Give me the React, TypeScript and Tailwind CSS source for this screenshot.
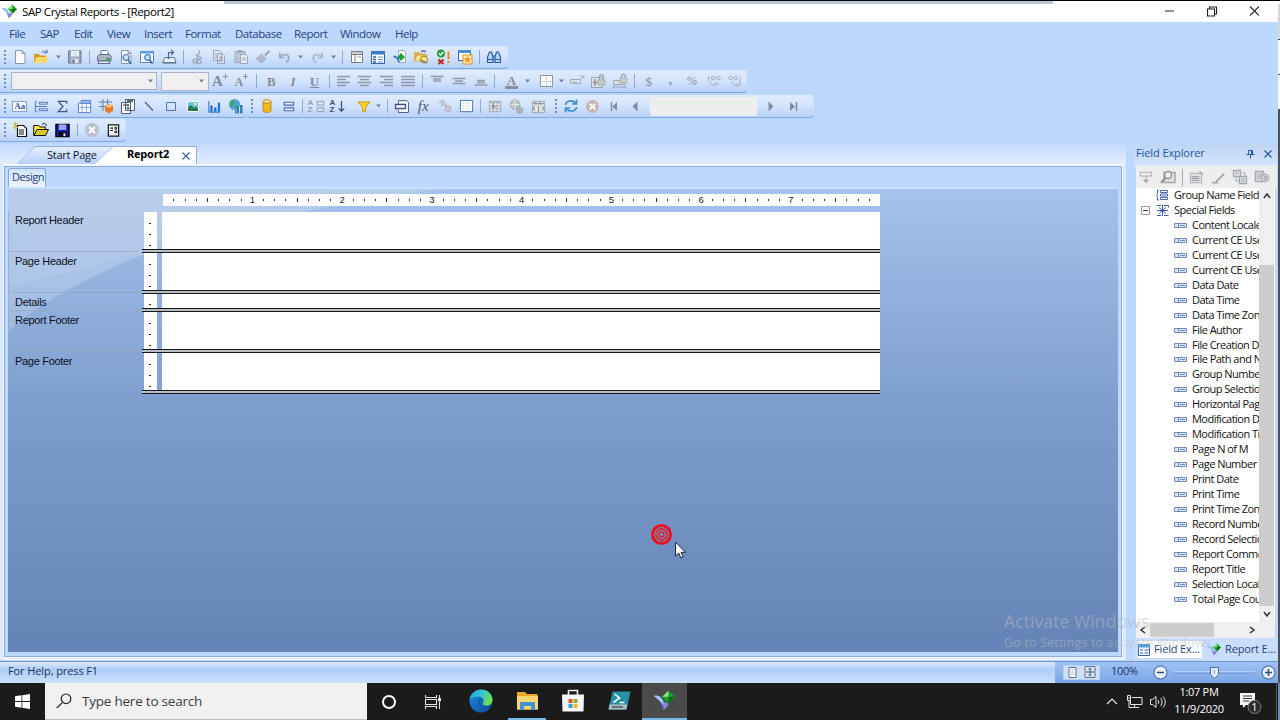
import type { ReactNode } from 'react';
import clsx from 'clsx';

type IconProps = { children: ReactNode; size?: number; dim?: boolean; vb?: string };

function Icon({ children, size = 16, dim, vb = '0 0 16 16' }: IconProps) {
  return (
    <svg width={size} height={size} viewBox={vb} fill="none" className={clsx('shrink-0', dim && 'opacity-75')}>
      {children}
    </svg>
  );
}

// one 21.6px button slot of a toolbar
function Tool({ children }: { children: ReactNode }) {
  return <div className="flex h-full w-[21.6px] shrink-0 items-center justify-center">{children}</div>;
}

function Sep() {
  return (
    <div className="flex w-[7.4px] shrink-0 justify-center">
      <span className="h-[14px] w-px bg-[#8ba9d6]" />
    </div>
  );
}

function Caret({ className = 'w-[11px]' }: { className?: string }) {
  return (
    <div className={clsx('flex shrink-0 items-center justify-center', className)}>
      <svg width="5" height="4" viewBox="0 0 5 4"><path d="M0 .5h5L2.500 3.500z" fill="#6f7f9c" /></svg>
    </div>
  );
}

function Grip() {
  return (
    <div className="flex w-[9px] shrink-0 flex-col items-center gap-[2px]">
      {[0, 1, 2, 3].map((i) => <span key={i} className="h-[2px] w-[2px] bg-[#6d8fc9]" />)}
    </div>
  );
}

function Bar({ children, className }: { children: ReactNode; className?: string }) {
  return (
    <div className={clsx('flex h-[23px] shrink-0 items-center rounded-r-[4px] border-b border-[#7ea6e0] bg-linear-to-b from-[#dfebff] via-[#d3e3fc] to-[#b7d2fa]', className)}>
      {children}
    </div>
  );
}

function CrystalLogo({ size = 16 }: { size?: number }) {
  return (
    <Icon size={size}>
      <path d="M0 4.500C4.500 4 7 6.500 7.400 10L7 15.500C6 10 4 7 0 4.500z" fill="#4a7fd0" />
      <path d="M0 4.500c3-.8 6 .6 7.200 4.500L8 12z" fill="#9fc4f4" />
      <path d="M7 15.500c1.800-1 3.600-3 4-5L7.500 9z" fill="#8f83dd" />
      <path d="M11 .5l4.900 4.700L11 10.500 6.300 5.200z" fill="#18a321" />
      <path d="M11 .5v4.700H6.300z" fill="#8ae886" />
      <path d="M11 10.500V5.200h4.900z" fill="#0b6b1b" />
    </Icon>
  );
}

const gray = '#8b929e';
const navy = '#3a5791';

const Page = ({ stroke = '#8395ba' }: { stroke?: string }) => (
  <path d="M3.500 1.500h6.500l3 3v10h-9.500zM10 1.500v3h3" fill="#fff" stroke={stroke} />
);

function StandardBar() {
  return (
    <Bar className="w-[508px]">
      <Grip />
      <Tool><Icon><Page /></Icon></Tool>
      <Tool>
        <Icon>
          <path d="M1 5h5l1 1.500h6V14H1z" fill="#d99b28" />
          <path d="M3.500 8H16l-3 6H1z" fill="#fbd769" />
          <path d="M8.500 4c1-2.500 4-2.500 5.500-.5M14 .8v3h-3" stroke="#4d6ea8" />
        </Icon>
      </Tool>
      <Caret className="w-[12px]" />
      <Tool>
        <Icon>
          <path d="M1.500 2h12.500v12H1.500z" fill="#9aa5b9" stroke="#6c7890" />
          <path d="M4 2h8v5.500H4z" fill="#f4f7fc" /><path d="M5.500 4h5M5.500 6h5" stroke="#c0cadb" />
          <path d="M4.500 9.500h7V14h-7z" fill="#dbe3ef" /><path d="M5.500 10.500h2V14h-2z" fill="#5c6880" />
        </Icon>
      </Tool>
      <Sep />
      <Tool>
        <Icon>
          <path d="M5 6V1.500h6l1 1V6" fill="#fff" stroke="#6880a9" />
          <path d="M1.500 7.500l2-2h10l1.500 2V12H1.500z" fill="#a9b5c9" stroke="#5b6d8c" />
          <path d="M3 12h10l1 2.500H2z" fill="#e9eef6" stroke="#5b6d8c" /><path d="M10 9h4v2h-4z" fill="#3aa04a" />
        </Icon>
      </Tool>
      <Tool>
        <Icon><Page /><circle cx="8" cy="8.500" r="3" fill="#c9e5fb" stroke="#3d77b8" strokeWidth="1.200" /><path d="M10 11l3 3.500" stroke="#2c5c97" strokeWidth="1.500" /></Icon>
      </Tool>
      <Tool>
        <Icon>
          <path d="M1.500 2.500h13v11h-13z" fill="#fff" stroke="#5a87c4" /><path d="M1 2h14v2.500H1z" fill="#5e9be3" />
          <circle cx="8.500" cy="8.500" r="2.800" fill="#c9e5fb" stroke="#3d77b8" strokeWidth="1.200" /><path d="M10.500 11l3 3.500" stroke="#2c5c97" strokeWidth="1.500" />
        </Icon>
      </Tool>
      <Tool>
        <Icon>
          <path d="M4 8.500h9.500l1.500 5H1.500z" fill="#e6edf7" stroke="#657796" /><path d="M2 14h13" stroke="#657796" strokeWidth="1.300" />
          <path d="M7.500 10V3.500h4M10 1l2.500 2.500L10 6" stroke="#4b658f" strokeWidth="1.200" />
        </Icon>
      </Tool>
      <Sep />
      <Tool><Icon dim><path d="M10 1L7 9.500M5.500 5.500l7 4M12 9l-6 1" stroke={gray} strokeWidth="1.200" /><circle cx="5" cy="12" r="1.900" stroke={gray} strokeWidth="1.300" /><circle cx="9" cy="12.800" r="1.900" stroke={gray} strokeWidth="1.300" /></Icon></Tool>
      <Tool><Icon dim><path d="M2.500 1.500h6l2 2v8h-8zM6.500 4.500h5l2 2v8h-7z" fill="#e3e7ee" stroke={gray} /><path d="M8 8h4M8 10h4M8 12h4M4 5h2M4 7h2M4 9h2" stroke={gray} /></Icon></Tool>
      <Tool><Icon dim><path d="M2 2.500h10v11H2z" fill="#b9bdc6" stroke={gray} /><path d="M5 1h4v3H5z" fill={gray} /><path d="M7.500 5.500h5l2 2v7h-7z" fill="#f3f4f7" stroke={gray} /><path d="M9 9h4M9 11h4" stroke={gray} /></Icon></Tool>
      <Tool><Icon dim><path d="M14.500 2L10 6.500" stroke={gray} strokeWidth="2.200" /><path d="M6.500 5L11 9.500 7 14c-2-.5-4.500-2.500-5.500-4.500z" fill="#a9adb7" stroke={gray} strokeWidth=".6" /></Icon></Tool>
      <Tool><Icon size={15} dim><path d="M3 3v5h5M3.500 7.500C6 3.500 13 4 12.500 9c-.2 2-1.500 3.500-3 4" stroke="#8694b0" strokeWidth="1.800" /></Icon></Tool>
      <Caret className="w-[12px]" />
      <Tool><Icon size={15} dim><path d="M13 3v5H8M12.500 7.500C10 3.500 3 4 3.500 9c.2 2 1.500 3.500 3 4" stroke="#a0abc0" strokeWidth="1.800" /></Icon></Tool>
      <Caret className="w-[10px]" />
      <Sep />
      <Tool><Icon><path d="M2.500 2.500h11v11h-11zM3 5.500h10M6 6v7" fill="#fff" stroke="#7a7d84" /><path d="M3 3h10v2H3z" fill="#c9ccd3" /><path d="M8 8h4" stroke="#999" /></Icon></Tool>
      <Tool><Icon><path d="M1.500 2.500h13v12h-13z" fill="#fff" stroke="#2f62ad" /><path d="M1 2h14v3.500H1z" fill="#3f79c9" /><path d="M3 8h3M3 10.500h3M3 13h3" stroke="#2f62ad" strokeWidth="1.400" /><path d="M8 8h5M8 10.500h5M8 13h5" stroke="#6c96d2" strokeWidth="1.200" /></Icon></Tool>
      <Tool><Icon><path d="M6.500 1.500h5l2 2v10h-7z" fill="#fff" stroke="#96a5c2" /><path d="M9 4l4 4-4 4-3.500-4z" fill="#23a52c" /><path d="M1.500 7.500c3 0 5 2 5.500 6" stroke="#3c78cb" strokeWidth="2" /></Icon></Tool>
      <Tool><Icon><path d="M1 3h5l1 1.500h5V11H1z" fill="#dfb04c" /><path d="M4 6h10l-3 6H1z" fill="#fde58f" stroke="#a8892e" strokeWidth=".6" /><circle cx="11" cy="10.500" r="3.500" fill="#ffe278" stroke="#a47c22" /><path d="M8 3c2-2 4-1 5 0M8 11l6 3" stroke="#63738f" strokeWidth="1.200" /></Icon></Tool>
      <Tool><Icon><circle cx="6" cy="4.500" r="4" fill="#2d9b3b" /><path d="M4 4.500L5.500 6 8.500 3" stroke="#fff" strokeWidth="1.300" /><path d="M3.500 10.500l5 4.500M8.500 10.500l-5 4.500" stroke="#c22b1c" strokeWidth="2.200" /><path d="M12.500 2.500h2v7.500h-2zM12.500 12h2v2h-2z" fill="#e98a10" /></Icon></Tool>
      <Tool><Icon><path d="M1.500 1.500h12v10h-12z" fill="#fff" stroke="#2f69b3" /><path d="M1 1h13v3H1z" fill="#4c8ddc" /><path d="M6 6h9v9H6z" fill="#fff1bf" stroke="#d79422" /><path d="M10.500 6.500l1.100 2.700 2.900.2-2.200 1.900.7 2.800-2.500-1.500L8 14.100l.7-2.800-2.200-1.900 2.900-.2z" fill="#f09a12" /></Icon></Tool>
      <Sep />
      <Tool><Icon><path d="M3.500 3h2l1.500 5v5.500H1.500V8zM10.500 3h2l2 5v5.500H9V8z" fill="#b9d5f6" stroke="#2d5aa0" strokeWidth="1.200" /><path d="M7 7h2M7 9h2M1.500 10.500H7M9 10.500h5.500" stroke="#2d5aa0" strokeWidth="1.200" /></Icon></Tool>
    </Bar>
  );
}

function Letter({ children, className }: { children: ReactNode; className?: string }) {
  return <span className={clsx("font-['Liberation_Serif',serif] leading-none text-[#858d9a]", className)}>{children}</span>;
}

const Plus = () => <Icon size={5} vb="0 0 5 5"><path d="M0 2.500h5M2.500 0v5" stroke={gray} /></Icon>;

// alignment buttons are stacks of short rules
function Lines({ d }: { d: string }) {
  return <Icon><path d={d} stroke="#9199a8" strokeWidth={1.600} /></Icon>;
}

function FormatBar() {
  return (
    <Bar className="w-[747px]">
      <Grip />
      <div className="ml-[2px] flex h-[18px] w-[146px] shrink-0 items-center justify-end border border-[#a5b4ca] bg-[#efefef] pr-px"><Caret className="w-[9px]" /></div>
      <div className="ml-[4px] flex h-[19px] w-[48px] shrink-0 items-center justify-end border border-[#a5b4ca] bg-[#efefef] pr-px"><Caret className="w-[11px]" /></div>
      <Tool><div className="flex items-start"><Letter className="text-[15px] font-bold">A</Letter><Plus /></div></Tool>
      <Tool><div className="flex items-start"><Letter className="pt-[2px] text-[12px] font-bold">A</Letter><Plus /></div></Tool>
      <div className="w-px shrink-0" />
      <Sep />
      <Tool><Letter className="text-[13px] font-bold">B</Letter></Tool>
      <Tool><Letter className="text-[13px] font-bold italic">I</Letter></Tool>
      <Tool><Letter className="text-[13px] font-bold underline">U</Letter></Tool>
      <Sep />
      <Tool><Lines d="M1 3.500h13M1 6.500h9M1 9.500h13M1 12.500h9" /></Tool>
      <Tool><Lines d="M1 3.500h13M3 6.500h9M1 9.500h13M3 12.500h9" /></Tool>
      <Tool><Lines d="M1 3.500h13M5 6.500h9M1 9.500h13M5 12.500h9" /></Tool>
      <Tool><Lines d="M1 3.500h14M1 6.500h14M1 9.500h14M1 12.500h14" /></Tool>
      <Sep />
      <Tool><Lines d="M1.500 3.500h13M4 6h8M4 8h8" /></Tool>
      <Tool><Lines d="M1.500 5.500h13M4 8h8M1.500 10.500h13" /></Tool>
      <Tool><Lines d="M4 7.500h8M4 9.500h8M1.500 12h13" /></Tool>
      <Sep />
      <div className="w-[2px] shrink-0" />
      <Tool>
        <div className="flex flex-col items-center"><Letter className="h-[12px] text-[13px] font-bold">A</Letter><span className="h-[3px] w-[13px] bg-[#858d9a]" /></div>
      </Tool>
      <Caret className="w-[10px]" />
      <Tool><div className="ml-[7px] h-[12px] w-[13px] border border-[#8b95a4] bg-white"><Icon size={11} vb="0 0 11 11"><path d="M5.500 1v9M1 5.500h9" stroke="#aaa" strokeDasharray="1 1" /></Icon></div></Tool>
      <Caret className="ml-[3px] w-[9px]" />
      <Tool><Icon dim><path d="M1.500 6.500h10v4h-10zM4 9h4" stroke={gray} fill="#e1e5ec" /><path d="M11.500 2l4 4M15.500 2l-4 4" stroke={gray} /></Icon></Tool>
      <Tool><Icon dim><path d="M1.500 4.500h11v10h-11z" fill="#e3dfd6" stroke={gray} /><path d="M5 6v7M3 9.500h5" stroke="#777" strokeWidth="1.300" /><path d="M8 7h7v5H8z" fill="#cbc5b6" stroke={gray} strokeWidth=".7" /><path d="M9.500 7V4c0-3 4-3 4 0v3" stroke={gray} strokeWidth="1.400" /></Icon></Tool>
      <Tool><Icon dim><path d="M1.500 7.500h11v4h-11z" fill="#e3dfd6" stroke={gray} /><path d="M1 14h13M2.500 12.500L1 14l1.500 1.500M12.500 12.500L14 14l-1.500 1.500" stroke={gray} /><path d="M8 5h7v5H8z" fill="#cbc5b6" stroke={gray} strokeWidth=".7" /><path d="M9.500 5V3.500c0-3 4-3 4 0V5" stroke={gray} strokeWidth="1.400" /></Icon></Tool>
      <Sep />
      <Tool><Letter className="text-[13px]">$</Letter></Tool>
      <Tool><Letter className="pb-[4px] text-[13px] font-bold">,</Letter></Tool>
      <Tool><Letter className="font-['Liberation_Sans',sans-serif] text-[12px]">%</Letter></Tool>
      <Tool><Icon size={14} dim><path d="M2 3v5M1 5h2" stroke={gray} /><circle cx="7" cy="4.500" r="2" stroke={gray} /><circle cx="13" cy="4.500" r="2" stroke={gray} /><path d="M4 9c0 5 7 5 7 1M8.500 12L11 9.500 13.500 12" stroke={gray} /></Icon></Tool>
      <Tool><Icon size={14} dim><circle cx="3" cy="4.500" r="2" stroke={gray} /><circle cx="9" cy="4.500" r="2" stroke={gray} /><path d="M14 3v10M5 9c0 5 6 4 7 4M10 9.500L12.500 12 10 14.500" stroke={gray} /></Icon></Tool>
    </Bar>
  );
}

function InsertBars() {
  return (
    <div className="mt-px flex">
      <Bar className="w-[247px]">
        <Grip />
        <Tool><div className="flex h-[11px] w-[15px] items-center justify-center border border-[#89a3d0] bg-[#f4f8ff] font-['Liberation_Serif',serif] text-[9px] leading-none font-bold text-[#47639d]">Aa</div></Tool>
        <Tool><Icon size={15}><path d="M3 2.500H1.500v11H3M5.500 3.500h9v2h-9zM1 8h13M5.500 10.500h9v2h-9z" stroke="#5676b2" /></Icon></Tool>
        <Tool><Icon size={15}><path d="M12.500 5V2.500H3.500L8.500 8l-5 5.500h9V11" stroke={navy} strokeWidth="1.300" /></Icon></Tool>
        <Tool><Icon size={15}><path d="M1.500 4.500h13v10h-13z" fill="#fff" stroke="#4f7cc5" /><path d="M4.500 1.500h10v3h-10z" fill="#9ec2f3" stroke="#4f7cc5" /><path d="M5.500 4v10M10 4v10M1 9h13" stroke="#7aa3df" /></Icon></Tool>
        <Tool><Icon><path d="M5 1v12M9.500 1v7M1 4h13M1 8.500h8" stroke="#6080bb" /><path d="M11 6l4 2v5l-4 2.500L7 13V8z" fill="#e57a22" /><path d="M11 6l4 2-4 2-4-2z" fill="#ffc170" /></Icon></Tool>
        <Tool><Icon><path d="M5.500 1.500h9v11h-9zM1.500 4.500h9v11h-9z" fill="#fff" stroke="#4f5c78" /><path d="M7 2h6v2H7z" fill="#59647c" /><path d="M3 7h6M8 6v5M6 9.500l2 2 2-2" stroke="#33415f" /></Icon></Tool>
        <Tool><Icon><path d="M4 4l8 8.500" stroke={navy} strokeWidth="1.100" /></Icon></Tool>
        <Tool><Icon><path d="M3.500 4.500h9v8h-9z" stroke="#5474af" /></Icon></Tool>
        <Tool><Icon><path d="M2.500 3.500h11v10h-11z" fill="#6cc4ed" stroke="#fff" /><path d="M3 13V9l3-2 3 3 2-1.500 2 2V13z" fill="#247b4c" /><circle cx="10" cy="6" r="1.300" fill="#fff17b" /></Icon></Tool>
        <Tool><Icon size={15}><path d="M2 2v12h12" stroke="#2a5fae" /><path d="M3.500 7H6v6.500H3.500zM7.500 9H10v4.500H7.500zM11.500 4H14v9.500h-2.500z" fill="#1f74cf" /></Icon></Tool>
        <Tool><Icon><circle cx="6.500" cy="6.500" r="5.500" fill="#4e9fe0" /><path d="M3 3c3-2 5 0 3 3S3 9 2 7zM8 7c2-1 3 1 2 3s-2 1-3 0z" fill="#3fa955" /><path d="M9 9h2v6.500H9zM12 7h2.500v8.500H12zM7 12h1.500v3.500H7z" fill="#347cb4" /></Icon></Tool>
      </Bar>
      <Bar className="w-[304px]">
        <Grip />
        <Tool><Icon><path d="M4 3.500v9c0 2.500 8 2.500 8 0v-9z" fill="#f3b91b" stroke="#ad7a10" strokeWidth=".8" /><ellipse cx="8" cy="3.500" rx="4" ry="1.800" fill="#ffe793" stroke="#ad7a10" strokeWidth=".8" /></Icon></Tool>
        <Tool><Icon size={15}><path d="M3.500 3.500h10v3h-10zM3.500 9.500h10v3h-10z" fill="#e6f0ff" stroke="#4b6dae" strokeWidth="1.200" /></Icon></Tool>
        <Sep />
        <Tool>
          <div className="flex items-center gap-px opacity-70"><div className="font-['Liberation_Sans',sans-serif] text-[8px] leading-[7px] font-bold text-[#7d8592]">A<br />Z</div><Icon size={13} vb="0 0 8 14"><path d="M.5 1.500h7v4h-7zM.5 8.500h7v4h-7z" stroke={gray} strokeWidth="1.200" /></Icon></div>
        </Tool>
        <Tool>
          <div className="flex items-center"><div className="font-['Liberation_Sans',sans-serif] text-[8px] leading-[7px] font-bold text-[#3e5277]">A<br />Z</div><Icon size={13} vb="0 0 8 14"><path d="M4 1v11M1 9l3 3 3-3" stroke="#3e5277" strokeWidth="1.400" /></Icon></div>
        </Tool>
        <div className="w-[2px] shrink-0" />
        <Tool><Icon><path d="M3 4h12l-4.500 5.500V14l-3-1V9.500z" fill="#ffd321" stroke="#c49716" /></Icon></Tool>
        <Caret className="w-[10px]" />
        <Sep />
        <Tool><Icon><path d="M4.500 6V2.500h8l2 2v10h-10V12" fill="#f5f8fd" stroke="#52658a" /><path d="M1.500 6.500h10v4h-10z" fill="#fff" stroke="#3f547f" strokeWidth="1.300" /></Icon></Tool>
        <Tool><span className="font-['Liberation_Serif',serif] text-[15px] leading-none text-[#46597f] italic">fx</span></Tool>
        <Tool><Icon dim><path d="M6 2l4 8M2 4l5-2M4 8l5-2" stroke={gray} /><circle cx="6" cy="5" r="2.500" fill="#bdbfc8" /><circle cx="11" cy="10.500" r="3" fill="#d7bdbb" stroke={gray} strokeWidth=".7" /></Icon></Tool>
        <Tool><Icon size={15}><path d="M1.500 1.500h13v12h-13z" fill="#fff" stroke="#3b73b8" /><path d="M4 4.500h9M4 7.500h9M4 10.500h9" stroke="#75a4d9" strokeDasharray="1 2" /></Icon></Tool>
        <Sep />
        <Tool><Icon size={15} dim><path d="M1.500 2.500h12v11h-12z" fill="#edeae3" stroke={gray} /><path d="M2 4h11M5.500 3v10M9.500 3v10M2 7.500h11M2 10.500h11" stroke="#999" /><path d="M5.500 4.500v6M4 8h4" stroke="#777" strokeWidth="1.500" /></Icon></Tool>
        <Tool><Icon size={15} dim><circle cx="6.500" cy="6" r="5" fill="#bcb8b0" stroke={gray} /><path d="M2 6h9M6.500 1v10" stroke="#eee" /><path d="M8 9l4-1 3 3-2 4H9z" fill="#aaa59b" stroke={gray} /></Icon></Tool>
        <Tool><Icon size={15} dim><path d="M1.500 2.500h13v12h-13z" fill="#eae6dd" stroke={gray} /><path d="M2 5h12M5 2v4M10 2v4M4 8L2 10l2 2M12 8l2 2-2 2M8 7v7" stroke="#7d7f84" strokeWidth="1.300" /></Icon></Tool>
      </Bar>
      <Bar className="w-[263px]">
        <Grip />
        <Tool><Icon><path d="M2.500 7C3 2.500 9.500 1.500 12.500 5M13.500 1.500V6H9M13.500 9c-.5 4.500-7 5.500-10 2M2.500 14.500V10H7" stroke="#3c8bcb" strokeWidth="1.700" /></Icon></Tool>
        <Tool><Icon size={15} dim><circle cx="8" cy="8" r="6.800" fill="#c5a49b" /><path d="M5 5l6 6M11 5l-6 6" stroke="#fff" strokeWidth="2.200" /></Icon></Tool>
        <Tool><Icon><path d="M5.500 4v9" stroke="#7b8da9" strokeWidth="1.500" /><path d="M6.500 8.500L11 4v9z" fill="#7b8da9" /></Icon></Tool>
        <Tool><Icon><path d="M4.500 8.500L9.500 3.500v10z" fill="#7b8da9" /></Icon></Tool>
        <div className="ml-[4px] h-[19px] w-[107px] shrink-0 rounded-[3px] bg-[#edefee]" />
        <div className="w-[3px] shrink-0" />
        <Tool><Icon><path d="M10.500 8.500L5.500 3.500v10z" fill="#7b8da9" /></Icon></Tool>
        <Tool><Icon><path d="M11.500 4v9" stroke="#7b8da9" strokeWidth="1.500" /><path d="M10 8.500L5 4v9z" fill="#7b8da9" /></Icon></Tool>
      </Bar>
    </div>
  );
}

function FileBar() {
  return (
    <Bar className="w-[126px]">
      <Grip />
      <Tool><Icon><path d="M5.500 3.500h6l3 3v8h-9z" fill="#fff" stroke="#111" strokeWidth="1.200" /><path d="M7 8h5M7 10h5M7 12h5" stroke="#111" /><path d="M1 1l5 5M6 1L1 6M3.500 0v7" stroke="#c8b912" /></Icon></Tool>
      <Tool><Icon><path d="M.7 3.500h5l1 1.500h5.500v8.500H.7z" fill="#fff23a" stroke="#111" /><path d="M4 7.500h11.500l-3 6H1z" fill="#d9c926" stroke="#111" /><path d="M9 2.500c2-2 4-1 4.500 1.500" stroke="#111" /></Icon></Tool>
      <Tool><Icon size={15}><path d="M1 1.500h14v13H1z" fill="#14199e" stroke="#050508" strokeWidth="1.500" /><path d="M4 1.500h8v6H4z" fill="#8fa8ef" /><path d="M4 9.500h8V15H4z" fill="#0b0b10" /><path d="M9 11h2v3H9z" fill="#eee" /></Icon></Tool>
      <Sep />
      <Tool><Icon><circle cx="8" cy="8" r="7" fill="#b9c0cb" /><path d="M5 5l6 6M11 5l-6 6" stroke="#fff" strokeWidth="2" /></Icon></Tool>
      <Tool><Icon size={15}><path d="M2.500 2h11v12h-11z" fill="#fff" stroke="#15171c" strokeWidth="1.300" /><path d="M4.500 5.500h3M4.500 8h3" stroke="#15171c" strokeWidth="1.300" /><path d="M9.500 4.500h2v2h-2zM9.500 8.500h2v2h-2z" stroke="#15171c" /></Icon></Tool>
    </Bar>
  );
}

const menus = [
  { label: 'File', w: 'w-[31px]' },
  { label: 'SAP', w: 'w-[34px]' },
  { label: 'Edit', w: 'w-[33px]' },
  { label: 'View', w: 'w-[37px]' },
  { label: 'Insert', w: 'w-[41px]' },
  { label: 'Format', w: 'w-[50px]' },
  { label: 'Database', w: 'w-[59px]' },
  { label: 'Report', w: 'w-[46px]' },
  { label: 'Window', w: 'w-[55px]' },
  { label: 'Help', w: 'w-[40px]' },
];

const sections = [
  { name: 'Report Header', h: 'h-[41px]', dots: 3 },
  { name: 'Page Header', h: 'h-[41px]', dots: 3 },
  { name: 'Details', h: 'h-[18px]', dots: 1 },
  { name: 'Report Footer', h: 'h-[41px]', dots: 3 },
  { name: 'Page Footer', h: 'h-[41px]', dots: 3 },
];

const specialFields = [
  'Content Locale', 'Current CE User ID', 'Current CE User Name', 'Current CE User Time Zone', 'Data Date', 'Data Time',
  'Data Time Zone', 'File Author', 'File Creation Date', 'File Path and Name', 'Group Number', 'Group Selection Formula',
  'Horizontal Page Number', 'Modification Date', 'Modification Time', 'Page N of M', 'Page Number', 'Print Date',
  'Print Time', 'Print Time Zone', 'Record Number', 'Record Selection Formula', 'Report Comments', 'Report Title',
  'Selection Locale', 'Total Page Count',
];

function Ruler() {
  return (
    <div className="ml-[155px] flex h-[12px] w-[717px] items-center bg-white pl-[5.200px]">
      {Array.from({ length: 63 }, (_, i) => i + 1).map((n) => (
        <div key={n} className="flex w-[11.220px] shrink-0 items-center justify-center">
          {n % 8 === 0 ? (
            <span className="font-['Liberation_Sans',sans-serif] text-[9.500px] leading-none text-[#222]">{n / 8}</span>
          ) : n % 4 === 0 ? (
            <span className="h-[4px] w-px bg-[#333]" />
          ) : (
            <span className="h-[2px] w-px bg-[#333]" />
          )}
        </div>
      ))}
    </div>
  );
}

function DesignSurface() {
  return (
    <div className="relative h-[465px] overflow-hidden border-t-2 border-[#c4e2fb] bg-linear-to-b from-[#a4c2ec] via-[#7d9dce] via-48% to-[#6484b7]">
      <svg className="absolute top-0 left-0" width="500" height="150" viewBox="0 0 500 150">
        <defs>
          <linearGradient id="sheen" x1="0" y1="0" x2="0" y2="1">
            <stop offset="0" stopColor="#bccfea" stopOpacity=".75" />
            <stop offset="1" stopColor="#b4caee" stopOpacity=".45" />
          </linearGradient>
        </defs>
        <path d="M0 0h440C330 10 220 40 135 66 85 84 30 115 0 143z" fill="url(#sheen)" />
        <path d="M0 0h330C250 20 190 42 135 62 90 78 40 90 0 96z" fill="#c3d4ef" fillOpacity=".22" />
      </svg>
      <div className="relative pt-[5px]">
        <Ruler />
        <div className="flex pt-[5px]">
          <div className="w-[134px] shrink-0 pr-[3px] font-['Liberation_Sans',sans-serif] text-[11px] leading-[18px] tracking-[-0.3px]">
            {sections.map((s) => (
              <div key={s.name} className={clsx('border-b border-l border-[#98a6b8]/70 pl-[6px] text-[#0c1220] last:border-b-transparent', s.h)}>{s.name}</div>
            ))}
          </div>
          <div className="mt-px w-[738px] shrink-0">
            {sections.map((s) => (
              <div key={s.name} className={clsx('flex flex-col', s.h)}>
                <div className="ml-[2px] flex flex-1">
                  <div className="flex w-[13px] flex-col items-center justify-end gap-[10.200px] bg-white pr-[2px] pb-[3px]">
                    {Array.from({ length: s.dots }, (_, i) => <span key={i} className="h-px w-[2px] bg-[#222]" />)}
                  </div>
                  <div className="w-[5px]" />
                  <div className="flex-1 bg-white" />
                </div>
                <div className="h-[4px] border-y border-[#15171b] bg-[#b9bcc0]" />
              </div>
            ))}
          </div>
        </div>
      </div>
    </div>
  );
}

function DocumentPane() {
  return (
    <div className="flex w-[1126px] shrink-0 flex-col">
      <div className="flex h-[20px] items-end bg-linear-to-b from-[#c3dbff] to-[#e2edff] pl-[17px]">
        <div className="h-[18px] w-[100px] bg-[#8fb0e0] pt-px [clip-path:polygon(18px_0,100%_0,82px_100%,0_100%)]">
          <div className="h-[17px] bg-linear-to-b from-[#e6f0ff] to-[#b3d0f8] pl-[30px] text-[11px] leading-[15px] tracking-[-0.25px] text-[#141a28] [clip-path:polygon(18px_0,100%_0,82px_100%,0_100%)]">Start Page</div>
        </div>
        <div className="-ml-[22px] h-[18px] w-[102px] bg-[#8fb0e0] pt-px pr-px [clip-path:polygon(18px_0,100%_0,100%_100%,0_100%)]">
          <div className="flex h-[17px] items-center bg-white pb-[2px] pl-[32px] text-[11px] font-bold tracking-[-0.2px] text-black [clip-path:polygon(18px_0,100%_0,100%_100%,0_100%)]">
            Report2
            <svg className="mt-[2px] ml-[13px]" width="8" height="8" viewBox="0 0 8 8"><path d="M.5.500l7 7M7.500.500l-7 7" stroke="#3d5e9e" strokeWidth="1.200" /></svg>
          </div>
        </div>
      </div>
      <div className="flex h-[496px] flex-col border-x-3 border-[#dbe9fd] bg-[#f1f7ff] pt-[2px]">
        <div className="mx-px flex flex-1 flex-col border border-[#8facd9] bg-[#bdd8ff] px-[3px] pb-[4px]">
          <div className="flex h-[20px] items-end">
            <div className="h-[19px] w-[38px] rounded-t-[3px] border border-b-0 border-[#86a7da] bg-linear-to-b from-[#d0e3ff] to-[#eef5ff] pl-[3px] text-[11px] leading-[15px] tracking-[-0.5px] text-[#1e3c77]">Design</div>
          </div>
          <DesignSurface />
        </div>
        <div className="h-[4px] bg-[#e8f1fd]" />
      </div>
    </div>
  );
}

const FieldIcon = () => (
  <svg width="13" height="7" viewBox="0 0 13 7" className="shrink-0"><path d="M.5 1.500h12v4H.5z" fill="#dbe5f8" stroke="#6f88c2" /><path d="M4.500 2v3M6 3.500h5" stroke="#6f88c2" /></svg>
);

function Chevron({ dir }: { dir: 'up' | 'down' | 'left' | 'right' }) {
  const d = { up: 'M1 6l3-4 3 4', down: 'M1 2l3 4 3-4', left: 'M6 1L2 4l4 3', right: 'M2 1l4 3-4 3' }[dir];
  return <svg width="8" height="8" viewBox="0 0 8 8" fill="none"><path d={d} stroke="#333" strokeWidth="1.500" /></svg>;
}

function FieldExplorer() {
  return (
    <div className="ml-[8px] flex w-[143px] shrink-0 flex-col">
      <div className="flex h-[22px] items-center bg-linear-to-b from-[#bdd5f3] to-[#d5e6fd] pb-[3px] pl-[2px] text-[11px] text-[#2456a4]">
        <span className="w-[110px] tracking-[-0.1px]">Field Explorer</span>
        <svg width="9" height="10" viewBox="0 0 9 10" fill="none"><path d="M2.500 1.500h4v4h-4zM5.500 1v5M.5 5.500h8M4.500 6v3.500" stroke="#2456a4" /></svg>
        <svg className="ml-[9px]" width="8" height="8" viewBox="0 0 8 8"><path d="M.5.500l7 7M7.500.500l-7 7" stroke="#2456a4" strokeWidth="1.200" /></svg>
      </div>
      <div className="ml-[2px] flex h-[22px] items-center bg-[#eeeeee]">
        <Tool><Icon size={15} dim><path d="M1.500 2.500h12v4h-12zM7.500 6v4" stroke={gray} /><path d="M4 10h7l-3.500 4z" fill={gray} /></Icon></Tool>
        <Tool><Icon size={16} dim><path d="M4 3.500h11v10H4z" fill="#ddd" stroke={gray} strokeWidth="1.500" /><circle cx="8" cy="6" r="3.500" fill="#eee" stroke="#777" strokeWidth="1.500" /><path d="M5.500 8.500L1 14" stroke="#777" strokeWidth="2" /></Icon></Tool>
        <div className="mx-[3px] h-[17px] w-px bg-[#aaa]" />
        <Tool><Icon size={15} dim><path d="M1.500 3.500h12v10h-12z" fill="#ddd" stroke={gray} /><path d="M3 7h8M3 9h8M3 11h8M11 1l4 4" stroke={gray} strokeWidth="1.300" /></Icon></Tool>
        <Tool><Icon size={15} dim><path d="M14 4L7 11l-2 1.500M1 13.500h7" stroke={gray} strokeWidth="2" /></Icon></Tool>
        <Tool><Icon size={16} dim><path d="M1.500 1.500h7v6h-7zM7.500 7.500h7v7h-7z" fill="#ddd" stroke={gray} strokeWidth="1.300" /><path d="M3 4h4M9 10h4M9 12h4M10 4h3v3M4 9v3h3" stroke={gray} /></Icon></Tool>
        <Tool><Icon size={16} dim><path d="M1.500 2.500h8v10h-8z" fill="#ddd" stroke={gray} strokeWidth="1.500" /><path d="M3 5h5M3 7h5M3 9h5" stroke={gray} /><circle cx="11" cy="9" r="4" fill="#ccc" stroke={gray} /><path d="M10 7l3 2-3 2" stroke="#777" /></Icon></Tool>
      </div>
      <div className="ml-[2px] flex h-[434px] w-[139px] bg-white">
        <div className="w-[123px] shrink-0 overflow-hidden text-[11px] leading-[14.960px] tracking-[-0.52px] whitespace-nowrap text-[#111]">
          <div className="flex h-[14.960px] items-center pl-[20px]">
            <svg width="13" height="12" viewBox="0 0 13 12" fill="none" className="mr-[5px] shrink-0"><path d="M3 1H1.500v3.500L.5 6l1 1.500V11H3M4.500 1.500h7v2h-7zM4.500 5h7v2h-7zM4.500 8.500h7v2h-7z" stroke="#4766ab" /></svg>
            Group Name Fields
          </div>
          <div className="flex h-[14.960px] items-center pl-[5px]">
            <svg width="9" height="9" viewBox="0 0 9 9" fill="none" className="mr-[6px] shrink-0"><path d="M.5.500h8v8h-8z" fill="#fff" stroke="#999" /><path d="M2 4.500h5" stroke="#345" /></svg>
            <svg width="13" height="13" viewBox="0 0 13 13" fill="none" className="mr-[5px] shrink-0"><path d="M1 1.500h4M8 1.500h4.500v2M1 11.500h4M8 11.500h4.500M1 6.500h11M6.500 1v11M3 3.500l7 6M10 3.500l-7 6" stroke="#3c5ca3" /></svg>
            Special Fields
          </div>
          {specialFields.map((f) => (
            <div key={f} className="flex h-[14.960px] items-center gap-[5px] pl-[38px]"><FieldIcon />{f}</div>
          ))}
        </div>
        <div className="flex w-[15px] flex-col items-center bg-[#efefef]">
          <div className="flex h-[16px] items-center"><Chevron dir="up" /></div>
          <div className="mt-[61px] h-[341px] w-full bg-[#cdcdcd]" />
          <div className="flex h-[16px] items-center"><Chevron dir="down" /></div>
        </div>
      </div>
      <div className="ml-[2px] flex h-[16px] w-[139px] items-center bg-[#efefef]">
        <div className="flex w-[14px] justify-center"><Chevron dir="left" /></div>
        <div className="h-[14px] w-[64px] bg-[#cdcdcd]" />
        <div className="ml-[31px] flex w-[14px] justify-center"><Chevron dir="right" /></div>
      </div>
      <div className="flex flex-1 items-start bg-[#c9defd] pt-[3px] text-[11px] tracking-[-0.15px] text-[#1f3f7c]">
        <div className="ml-[4px] flex h-[17px] w-[64px] items-center gap-[4px] bg-white">
          <svg width="12" height="12" viewBox="0 0 12 12" fill="none"><path d="M.5.500h11v11H.5z" fill="#fff" stroke="#2f62ad" /><path d="M0 0h12v3.500H0z" fill="#3f9ae0" /><path d="M2 6h3M2 9h3M6.500 6h4M6.500 9h4" stroke="#2f62ad" /></svg>
          Field Ex...
        </div>
        <div className="ml-[6px] flex h-[17px] items-center gap-[4px]"><CrystalLogo size={13} />Report E...</div>
      </div>
    </div>
  );
}

function StatusBar() {
  return (
    <div className="flex h-[22px] w-[1278px] items-center border-t border-[#6f94c9] bg-linear-to-b from-[#dceaff] via-[#afcdf6] via-35% to-[#c9dffd] text-[11px] text-[#1b3263]">
      <div className="w-[1055px] pb-[2px] pl-[8px] tracking-[-0.1px]">For Help, press F1</div>
      <div className="flex h-full flex-1 items-center bg-linear-to-b from-[#9ec2f5] to-[#7aa6e4] pb-px pl-[8px]">
        <div className="flex h-[15px] w-[37px] items-center justify-around border border-[#b8d1f6] bg-[#cfe0fa]">
          <svg width="9" height="11" viewBox="0 0 9 11" fill="none"><path d="M1 .5h7v10H1z" fill="#fff" stroke="#5e708f" /><path d="M2.500 3h4M2.500 5h4M2.500 7h4" stroke="#b5c2d6" /></svg>
          <svg width="12" height="12" viewBox="0 0 12 12" fill="none"><path d="M1 .5h10v11H1z" fill="#dce6f5" stroke="#5e708f" /><path d="M6 2v8M2 6h8M4.500 3.500L6 2l1.500 1.500M4.500 8.500L6 10l1.500-1.500" stroke="#445b86" /></svg>
        </div>
        <span className="ml-[11px] w-[42px] pb-px tracking-[-0.3px]">100%</span>
        <svg width="15" height="15" viewBox="0 0 15 15" fill="none"><circle cx="7.500" cy="7.500" r="6.500" fill="#e6effc" stroke="#3e5f92" /><path d="M4 7.500h7" stroke="#2f4d7e" strokeWidth="1.500" /></svg>
        <svg className="mx-[6px]" width="81" height="15" viewBox="0 0 81 15" fill="none"><path d="M0 7h81" stroke="#d9e8ff" /><path d="M0 8h81" stroke="#688fca" /><path d="M36.500 2.500h8v7l-4 4-4-4z" fill="#e1ecfb" stroke="#4a6da5" /><path d="M40.500 5v4" stroke="#8ba6d0" /></svg>
        <svg width="15" height="15" viewBox="0 0 15 15" fill="none"><circle cx="7.500" cy="7.500" r="6.500" fill="#e6effc" stroke="#3e5f92" /><path d="M4 7.500h7M7.500 4v7" stroke="#2f4d7e" strokeWidth="1.500" /></svg>
      </div>
    </div>
  );
}

function TaskButton({ children, running, active }: { children: ReactNode; running?: boolean; active?: boolean }) {
  return (
    <div className={clsx('flex h-full flex-col items-center', active ? 'w-[45px] bg-[#4a4a4b]' : 'w-[46px]')}>
      <div className="flex flex-1 items-center">{children}</div>
      <div className={clsx('h-[2px]', active ? 'w-full bg-[#76b9ed]' : 'w-[38px]', running && !active && 'bg-[#76b9ed]')} />
    </div>
  );
}

function Taskbar() {
  return (
    <div className="flex h-[37px] bg-[#1b1b1c]">
      <div className="flex w-[45px] items-center justify-center">
        <svg width="15" height="15" viewBox="0 0 15 15" fill="#fff"><path d="M0 2.200l6.500-.9v5.700H0zM7.300 1.200L15 0v7H7.300zM0 7.900h6.500v5.800L0 12.800zM7.300 7.900H15V15l-7.700-1.200z" /></svg>
      </div>
      <div className="flex w-[322px] items-center border-b border-[#bdbdbd] bg-[#f2f1f1]">
        <svg className="ml-[11px]" width="16" height="16" viewBox="0 0 16 16" fill="none"><circle cx="10" cy="5.800" r="4.800" stroke="#222" strokeWidth="1.200" /><path d="M6.500 9.300L.8 15" stroke="#222" strokeWidth="1.200" /></svg>
        <span className="ml-[10px] text-[13.500px] tracking-[-0.22px] text-[#3b3b3b]">Type here to search</span>
      </div>
      <div className="flex w-[44px] items-center justify-center"><span className="h-[14px] w-[14px] rounded-full border-2 border-white" /></div>
      <div className="flex w-[47px] items-center justify-center pr-[3px]">
        <svg width="16" height="16" viewBox="0 0 16 16" fill="none" stroke="#e8e8e8"><path d="M.5 1v2.500h11V1M.5 5.500h11v5H.5zM.5 15v-2.500h11V15M14.500 1v3M14.500 8v7" strokeWidth="1.100" /><path d="M13.500 4.500h2v2.500h-2z" fill="#fff" /></svg>
      </div>
      <TaskButton>
        <svg width="24" height="24" viewBox="0 0 24 24">
          <defs>
            <linearGradient id="edgeTop" x1="0" y1="0" x2="1" y2=".5"><stop offset="0" stopColor="#1f9fe0" /><stop offset=".55" stopColor="#37c6cf" /><stop offset="1" stopColor="#6fe04c" /></linearGradient>
            <linearGradient id="edgeLow" x1="0" y1="0" x2="1" y2="1"><stop offset="0" stopColor="#1b8ee0" /><stop offset="1" stopColor="#0c4a9a" /></linearGradient>
          </defs>
          <circle cx="12" cy="12" r="11.500" fill="url(#edgeLow)" />
          <path d="M.6 11C1.500 4.500 6.500.500 12.500.500 19 .5 23.500 5.500 23.500 10.500c0 4-3 6-6 6-2 0-4.500-.8-3.500-2.500 1.500-2.500.5-6-3.500-6.500C6 7 2 8.500.6 11z" fill="url(#edgeTop)" />
          <path d="M11 10.500c-1.800 3 .5 8.500 5.500 8.500 2.500 0 4.500-.8 6-2.200l-.8 1.600c-5 1-10 .5-11.500-3.400-.6-1.800-.2-3.500.8-4.500z" fill="#17314f" />
        </svg>
      </TaskButton>
      <TaskButton running>
        <svg width="21" height="18" viewBox="0 0 21 18"><path d="M0 0h8l2 2h10.500v15.500H0z" fill="#e5a72c" /><path d="M0 4h21v13.500H0z" fill="#fbd66d" /><path d="M3 10h15v8h-4v-4H7v4H3z" fill="#3d93da" /></svg>
      </TaskButton>
      <TaskButton>
        <svg width="22" height="23" viewBox="0 0 22 23"><path d="M6.500 6V1.500h9V6" stroke="#f2f2f2" strokeWidth="1.600" fill="none" /><path d="M0 5.500h22L21.500 22.500H.5z" fill="#f6f6f6" /><path d="M6.500 10h4v4h-4z" fill="#e2502b" /><path d="M11.500 10h4v4h-4z" fill="#7fb62c" /><path d="M6.500 15h4v4h-4z" fill="#29a0e0" /><path d="M11.500 15h4v4h-4z" fill="#f6b91d" /></svg>
      </TaskButton>
      <TaskButton>
        <svg width="23" height="19" viewBox="0 0 23 19" fill="none"><path d="M4.500.500h18L18.500 18.500H.5z" fill="#2391a8" /><path d="M1.500 13.500h18l-1.200 5H.5z" fill="#a8bfc6" /><path d="M6.500 3l5 4-6 4.500M11.500 11.500h5" stroke="#fff" strokeWidth="1.600" /><path d="M4 16h11" stroke="#555" strokeWidth="1.500" /></svg>
      </TaskButton>
      <TaskButton active><CrystalLogo size={21} /></TaskButton>
      <div className="flex-1" />
      <div className="flex items-center text-white">
        <svg width="12" height="7" viewBox="0 0 12 7" fill="none"><path d="M1 6l5-5 5 5" stroke="#e5e5e5" strokeWidth="1.200" /></svg>
        <svg className="ml-[9px]" width="16" height="14" viewBox="0 0 16 14" fill="none" stroke="#e5e5e5"><path d="M5 2.500h10v7H3.500V6M7.500 9.500v3M5 12.500h7M.5.500h3v5h-3zM.5 3h3M2 5.500v7h3" /></svg>
        <svg className="ml-[7px]" width="16" height="14" viewBox="0 0 16 14" fill="none" stroke="#e5e5e5"><path d="M.5 4.500h2l3.500-3v11l-3.500-3h-2zM8 5c1 1 1 3 0 4M10.500 3c2 2.500 2 5.500 0 8M13 1.500c3 3.500 3 7.500 0 11" /></svg>
        <div className="ml-[7px] w-[52px] pb-[2px] text-center text-[11px] leading-[16.500px] tracking-[-0.3px] whitespace-nowrap">1:07 PM<br />11/9/2020</div>
        <svg className="mt-px ml-[15px]" width="24" height="24" viewBox="0 0 24 24"><path d="M0 3h15v12H6l-3 3v-3H0z" fill="#f4f4f4" /><path d="M3 6h9M3 8.500h9M3 11h6" stroke="#333" /><circle cx="14.500" cy="17" r="6.500" fill="#2c2c2d" stroke="#808080" /><text x="14.500" y="21" textAnchor="middle" fontSize="11" fill="#fff" className="font-['Open_Sans',sans-serif]">1</text></svg>
        <div className="ml-[12px] h-[37px] w-[2px] border-l border-[#555]" />
        <div className="h-[37px] w-[2px] bg-[#7187b9]" />
      </div>
    </div>
  );
}

export default function App() {
  return (
    <div className="relative h-[720px] w-[1280px] overflow-hidden bg-[#bdd8ff] font-['Open_Sans','Noto_Sans',sans-serif]">
      <div className="h-px bg-black" />
      <div className="flex h-[3px] bg-white"><div className="ml-[224px] w-[829px] bg-[#b4c7dd]" /></div>
      <div className="flex h-[18px] items-center bg-white pb-[3px]">
        <div className="ml-[2px]"><CrystalLogo size={15} /></div>
        <span className="ml-[5px] flex-1 text-[11.500px] tracking-[-0.42px] text-black">SAP Crystal Reports - [Report2]</span>
        <svg width="94" height="11" viewBox="0 0 94 11" fill="none" stroke="#222"><path d="M0 5h9M42.500 3h7v7h-7zM44.500 3V1h7v7h-2M85 .5l9 9M94 .5l-9 9" strokeWidth="1.100" /></svg>
        <div className="w-[21px]" />
      </div>
      <div className="flex h-[24px] items-center pb-px pl-[9px] text-[11.500px] tracking-[-0.5px] text-[#25437f]">
        {menus.map((m) => <div key={m.label} className={clsx('shrink-0', m.w)}>{m.label}</div>)}
      </div>
      <div className="flex h-[98px] flex-col gap-px">
        <StandardBar />
        <FormatBar />
        <InsertBars />
        <FileBar />
      </div>
      <div className="flex h-[517px]">
        <DocumentPane />
        <FieldExplorer />
      </div>
      <StatusBar />
      <Taskbar />

      {/* sliver of the host desktop behind the right edge */}
      <div className="absolute top-[4px] right-0 flex h-[679px] w-[2px] flex-col">
        <div className="h-[36px] border-b border-[#444] bg-[#d6d6d6]" />
        <div className="h-[35px] border-b border-[#444] bg-white" />
        <div className="h-[34px] bg-white" />
        <div className="flex-1 bg-[#4b5058]" />
      </div>
      <div className="absolute top-[609px] left-[1004px] whitespace-nowrap text-[#b9b9b9]/55">
        <div className="text-[17.500px] leading-[24px] tracking-[0.1px]">Activate Windows</div>
        <div className="text-[12.500px] leading-[19px] tracking-[0.15px]">Go to Settings to activate Windows.</div>
      </div>
      <svg className="absolute top-[523px] left-[650px]" width="38" height="38" viewBox="0 0 38 38" fill="none">
        <circle cx="11.500" cy="11.500" r="9" stroke="#f0101c" strokeWidth="3" />
        <circle cx="11.500" cy="11.500" r="5.500" stroke="#e8202c" strokeWidth="1.800" />
        <circle cx="11.500" cy="11.500" r="2.500" stroke="#e8202c" strokeWidth="1.600" />
        <path d="M25.500 19v14l3.200-3 2.300 5 2.200-1-2.200-4.700h4.500z" fill="#fff" stroke="#1c2536" />
      </svg>
    </div>
  );
}
